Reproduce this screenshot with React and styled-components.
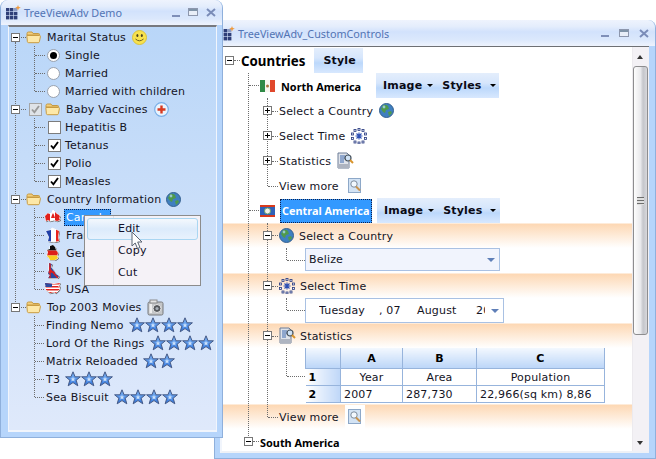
import React from 'react';
import styled, { createGlobalStyle } from 'styled-components';

const Global = createGlobalStyle`
  html, body { margin: 0; padding: 0; background: #fff; }
  body { font-family: "DejaVu Sans", Verdana, sans-serif; font-size: 11px; letter-spacing: .18px; color: #14141f; }
`;

const Desktop = styled.div`
  position: relative;
  width: 656px;
  height: 459px;
  overflow: hidden;
  background: #fff;
`;

const Win = styled.div`
  position: absolute;
  left: ${(p) => p.$x}px;
  top: ${(p) => p.$y}px;
  width: ${(p) => p.$w}px;
  height: ${(p) => p.$h}px;
  z-index: ${(p) => p.$z};
  display: flex;
  flex-direction: column;
  box-sizing: border-box;
  border: 1px solid #8fb0dc;
  border-top: 0;
  border-radius: 8px 8px 0 0;
  background: #b6d5fb;
  overflow: hidden;
`;

const TitleBar = styled.div`
  flex: none;
  height: ${(p) => p.$h}px;
  display: flex;
  align-items: center;
  box-sizing: border-box;
  padding: 0 6px 0 ${(p) => p.$pl}px;
  background: linear-gradient(#eef3fd 0, #e4edfc 25%, #d2e2fc 45%, #dbe8fc 75%, #eef3fd 100%);
`;

const TitleText = styled.span`
  margin-left: 3px;
  font-family: "Noto Sans", sans-serif;
  font-size: 10.8px;
  letter-spacing: 0;
  color: #5274b4;
`;

const Controls = styled.div`
  margin-left: auto;
  display: flex;
  align-items: center;
  gap: ${(p) => p.$gap}px;
`;

const LeftBody = styled.div`
  flex: 1;
  min-height: 0;
  margin: 0 5px 5px 7px;
  border: 1px solid #f1f5fc;
  border-top: 2px solid #77797f;
  border-bottom-width: 2px;
  display: flex;
`;

const Pane = styled.div`
  position: relative;
  flex: 1;
  min-width: 0;
  overflow: hidden;
  box-sizing: border-box;
  padding-top: 1px;
  background: linear-gradient(#b9d6f8, #dfe9fb);
`;

const RightBody = styled.div`
  flex: 1;
  min-height: 0;
  margin: 0 6px 5px 5px;
  border-top: 1px solid #6e7074;
  border-left: 2px solid #f1f5fc;
  border-bottom: 2px solid #eef1f6;
  display: flex;
  background: #fff;
`;

const VLine = styled.i`
  position: absolute;
  z-index: 1;
  left: ${(p) => p.$x}px;
  top: ${(p) => p.$y}px;
  height: ${(p) => p.$len}px;
  border-left: 1px dotted #6d6d6d;
`;

const HLine = styled.i`
  position: absolute;
  z-index: 1;
  left: ${(p) => p.$x}px;
  top: ${(p) => p.$y}px;
  width: ${(p) => p.$len}px;
  border-top: 1px dotted #6d6d6d;
`;

const Row = styled.div`
  display: flex;
  align-items: center;
  height: ${(p) => p.$h || 18}px;
  box-sizing: border-box;
  padding-left: ${(p) => p.$pl}px;
  ${(p) => p.$band && 'background: linear-gradient(#fff 0, #fdd8b4 1px, #fff 100%);'}
`;

const Label = styled.span`
  margin-left: ${(p) => p.$ml ?? 6}px;
  padding-top: 1px;
  white-space: nowrap;
`;

const BoldLabel = styled(Label)`
  font-family: "Noto Sans", sans-serif;
  font-weight: 700;
  font-size: ${(p) => p.$size || 10.9}px;
  letter-spacing: 0;
  color: #000;
`;

const SelectedLabel = styled(BoldLabel)`
  height: 24px;
  line-height: 24px;
  padding-top: 0;
  width: 92px;
  box-sizing: border-box;
  padding-left: 2px;
  background: #3399ff;
  color: #fff;
  outline: 1px dotted #10204a;
  outline-offset: -1px;
`;

const SmallSelected = styled(Label)`
  height: 17px;
  line-height: 17px;
  padding-top: 0;
  width: 47px;
  box-sizing: border-box;
  padding-left: 2px;
  background: #3399ff;
  color: #fff;
  outline: 1px dotted #10204a;
  outline-offset: -1px;
`;

const Slot = styled.span`
  flex: none;
  display: inline-flex;
  margin-left: ${(p) => p.$ml ?? 0}px;
  ${(p) => p.$paper && 'background: #fff; height: 24px; align-items: center; padding: 0 3px;'}
`;

const Expander = styled.span`
  position: relative;
  z-index: 2;
  flex: none;
  width: 9px;
  height: 9px;
  box-sizing: border-box;
  border: 1px solid #777;
  background: #fff;
  &::before {
    content: '';
    position: absolute;
    left: 1px;
    right: 1px;
    top: 3px;
    height: 1px;
    background: #000;
  }
  ${(p) =>
    p.$plus &&
    `&::after {
      content: '';
      position: absolute;
      top: 1px;
      bottom: 1px;
      left: 3px;
      width: 1px;
      background: #000;
    }`}
`;

const Radio = styled.span`
  flex: none;
  width: 11px;
  height: 11px;
  border-radius: 50%;
  border: 1px solid #9aa2ae;
  background: #fff;
  display: flex;
  align-items: center;
  justify-content: center;
  &::after {
    content: '';
    width: 7px;
    height: 7px;
    border-radius: 50%;
    background: ${(p) => (p.$on ? '#000' : 'transparent')};
  }
`;

const Check = styled.span`
  flex: none;
  width: 11px;
  height: 11px;
  margin-left: ${(p) => p.$ml ?? 0}px;
  border: 1px solid ${(p) => (p.$dim ? '#a5a5a5' : '#7c7c7c')};
  background: ${(p) => (p.$dim ? '#dfe3e8' : '#fff')};
  display: flex;
  align-items: center;
  justify-content: center;
`;

const MenuBox = styled.div`
  position: absolute;
  z-index: 5;
  left: 83px;
  top: 215px;
  width: 117px;
  height: 71px;
  box-sizing: border-box;
  border: 1px solid #8c8c8c;
  background: #f5f2f7;
  padding: 2px;
  display: flex;
  flex-direction: column;
  &::before {
    content: '';
    position: absolute;
    left: 28px;
    top: 0;
    bottom: 0;
    width: 1px;
    background: #e2dfe6;
  }
`;

const MenuItem = styled.div`
  position: relative;
  height: 22px;
  line-height: 22px;
  padding-left: 31px;
  box-sizing: border-box;
  border-radius: 3px;
  color: #10102a;
  ${(p) =>
    p.$hot &&
    'border: 1px solid #a9d6f2; line-height: 20px; padding-left: 30px; background: linear-gradient(#f4f8fd, #dcebfb 50%, #e8f2fd);'}
`;

const Pointer = styled.svg`
  position: absolute;
  z-index: 6;
  left: 130px;
  top: 231px;
`;

const Tree = styled.div`
  flex: 1;
  min-width: 0;
  position: relative;
  overflow: hidden;
`;

const ToolButton = styled.div`
  flex: none;
  height: 25px;
  margin-left: ${(p) => p.$ml || 0}px;
  width: ${(p) => p.$w}px;
  display: flex;
  align-items: center;
  box-sizing: border-box;
  padding-left: ${(p) => p.$pad}px;
  background: linear-gradient(#e4eefc 0, #d6e6fc 40%, #bcd8fb 60%, #d8e8fe 100%);
  font-weight: 700;
  font-size: 11px;
  color: #0a0a14;
`;

const ButtonPart = styled.span`
  display: inline-flex;
  align-items: center;
  margin-right: ${(p) => p.$mr || 0}px;
`;

const Caret = styled.span`
  margin-left: ${(p) => p.$ml || 5}px;
  width: 0;
  height: 0;
  border: 3px solid transparent;
  border-top: 3px solid ${(p) => p.$color || '#000'};
  border-bottom: 0;
`;

const FieldCaret = styled.span`
  margin-left: auto;
  width: 0;
  height: 0;
  border: 4px solid transparent;
  border-top: 4px solid #5f7fb8;
  border-bottom: 0;
`;

const FieldRow = styled.div`
  height: 25px;
  padding-left: 83px;
  box-sizing: border-box;
`;

const Field = styled.div`
  width: ${(p) => p.$w}px;
  height: ${(p) => p.$h}px;
  box-sizing: border-box;
  border: 1px solid #a9c1e3;
  background: ${(p) => p.$bg};
  display: flex;
  align-items: center;
  padding: 0 4px 0 ${(p) => p.$pl}px;
`;

const DateParts = styled.div`
  flex: none;
  width: 166px;
  overflow: hidden;
  white-space: nowrap;
  display: flex;
`;

const DatePart = styled.span`
  flex: none;
  width: ${(p) => p.$w}px;
`;

const GridRow = styled.div`
  height: 56px;
  padding-left: 83px;
`;

const Grid = styled.table`
  border-collapse: collapse;
  table-layout: fixed;
  width: 299px;
  font-size: 11px;
  th, td {
    padding: 0;
    height: 16px;
    border: 1px solid #97b4dc;
    white-space: nowrap;
    overflow: hidden;
  }
  td { padding: 0 3px; }
  thead th {
    height: 20px;
    border-top: 0;
    color: #000;
    background: linear-gradient(#f3f8fe, #bcd6f8);
  }
  tbody th {
    text-align: left;
    padding-left: 3px;
    border-left: 0;
    color: #000;
    background: linear-gradient(90deg, #fff, #bfd7f8);
  }
  tr:first-child td { text-align: center; }
`;

const Scrollbar = styled.div`
  position: relative;
  flex: none;
  width: 17px;
  background: #f3f1f5;
  border-left: 1px solid #eceaee;
  box-sizing: border-box;
`;

const Arrow = styled.span`
  position: absolute;
  left: 4px;
  ${(p) => (p.$up ? 'top: 8px;' : 'bottom: 6px;')}
  width: 0;
  height: 0;
  border: 3px solid transparent;
  ${(p) =>
    p.$up
      ? 'border-bottom: 4px solid #333; border-top: 0;'
      : 'border-top: 4px solid #333; border-bottom: 0;'}
`;

const Thumb = styled.div`
  position: absolute;
  left: 0;
  top: 19px;
  width: 15px;
  height: 269px;
  box-sizing: border-box;
  border: 1px solid #8d8d8f;
  border-radius: 3px;
  background: linear-gradient(90deg, #fdfdfd, #e9e9ec 50%, #c5c6cb 70%, #d8d8dc);
  display: flex;
  align-items: center;
  justify-content: center;
`;

const Grip = styled.span`
  width: 7px;
  height: 8px;
  background: repeating-linear-gradient(#6d6d6d 0 1px, #dfdfdf 1px 2px, #dfdfdf 2px 3px);
`;

/* drawings */

const Logo = () => (
  <svg width="15" height="15" viewBox="0 0 15 15">
    {[0, 4, 8].flatMap((x) =>
      [3, 7, 11].map((y) => (
        <rect key={`${x}-${y}`} x={x} y={y} width="3.4" height="3.4" fill={x === 8 && y === 3 ? '#8c9cc4' : '#2f3f78'} />
      ))
    )}
    <path d="M12 0l.8 2 2 .6-2 .8-.8 2-.8-2-2-.8 2-.6z" fill="#f09a3c" />
  </svg>
);

const WinButtons = ({ gap }) => (
  <Controls $gap={gap}>
    <svg width="8" height="10" viewBox="0 0 8 10"><rect y="7" width="8" height="2" fill="#7f8fb8" /></svg>
    <svg width="10" height="9" viewBox="0 0 10 9">
      <rect x=".5" y=".5" width="9" height="7" fill="#e8eef8" stroke="#8d97ad" />
      <rect x="1" y="1" width="8" height="2" fill="#7f93a8" />
    </svg>
    <svg width="10" height="9" viewBox="0 0 10 9">
      <path d="M1 1l8 7M9 1L1 8" stroke="#7a8cb8" strokeWidth="2" fill="none" />
    </svg>
  </Controls>
);

const Folder = () => (
  <svg width="15" height="14" viewBox="0 0 15 14">
    <path d="M1 3.500Q1 2 2.500 2H6l1 1.500h5.500q1 0 1 1V5H1z" fill="#f4cf7c" stroke="#c49a45" />
    <path d="M.8 5.500h12.600q1.300 0 1 1.200l-1 5q-.2 1-1.200 1H2.600q-1 0-1.200-1z" fill="#fde8a8" stroke="#c99c42" />
  </svg>
);

const Smile = () => (
  <svg width="15" height="15" viewBox="0 0 15 15">
    <circle cx="7.500" cy="7.500" r="7" fill="#f8e24e" stroke="#d9c23c" />
    <ellipse cx="5.400" cy="5.600" rx="1" ry="1.500" fill="#4a4420" />
    <ellipse cx="9.800" cy="5.600" rx="1" ry="1.500" fill="#4a4420" />
    <path d="M3.500 9q4 3.600 8 0" fill="none" stroke="#6d6020" />
  </svg>
);

const RedPlus = () => (
  <svg width="15" height="15" viewBox="0 0 15 15">
    <circle cx="7.500" cy="7.500" r="6.800" fill="#eaf3fd" stroke="#7ab0e8" strokeWidth="1.200" />
    <path d="M3.500 7.500h8M7.500 3.500v8" stroke="#d83a20" strokeWidth="2.400" />
  </svg>
);

const Globe = () => (
  <svg width="15" height="15" viewBox="0 0 15 15">
    <circle cx="7.500" cy="7.500" r="7" fill="#3f7fc0" stroke="#35608f" />
    <path d="M4 2q3-1 5 1l1 3-3 1-1 3-2-1-2-3zM9 9l3-1 1 2-3 3z" fill="#4f9a4c" />
    <circle cx="5" cy="4" r="1.400" fill="#a9d3f0" opacity=".8" />
  </svg>
);

/* country silhouettes: the outline is drawn twice, shadow and white edge, then clipped bars */
const Silhouette = ({ id, d, w = 16, h = 16, children }) => (
  <svg width={w} height={h} viewBox={`0 0 ${w} ${h}`}>
    <path d={d} fill="#555" stroke="#777" strokeWidth="1" transform="translate(.6 .7)" />
    <path d={d} fill="#fff" stroke="#fff" strokeWidth="1" />
    <clipPath id={id}><path d={d} /></clipPath>
    <g clipPath={`url(#${id})`}>{children}</g>
  </svg>
);

const Canada = () => (
  <Silhouette id="ca" d="M0 7l3-3 1 1 3-1 1-3 2 2 2 2 2 1 1 2-1 1 1 2-3 1-3-1-4 1-2-1-2 1z">
    <rect y="0" width="5" height="16" fill="#e0201c" />
    <rect x="10" y="0" width="6" height="16" fill="#e0201c" />
    <path d="M7 6l1-2 1 2 1 3H6z" fill="#e0201c" />
  </Silhouette>
);

const France = () => (
  <Silhouette id="fr" d="M1 4l5-1 1-2 7 3-1 6 1 4-5 1-6-1 1-4z">
    <rect x="0" width="6" height="16" fill="#1f3fa8" />
    <rect x="11" width="5" height="16" fill="#e8241c" />
  </Silhouette>
);

const Germany = () => (
  <Silhouette id="de" d="M5 1l3-1 2 2 1 3 2 3-1 3 1 2-3 2H5l-1-2-2-2 1-4-1-2 3-1z">
    <rect width="16" height="5.500" fill="#0c0c0c" />
    <rect y="5.500" width="16" height="5" fill="#dd1f1a" />
    <rect y="10.500" width="16" height="6" fill="#f8cd20" />
  </Silhouette>
);

const Britain = () => (
  <Silhouette id="uk" d="M4 0l3 1-1 3 3 4 2 3 3 2-1 2H3l2-3-2-1 1-4z">
    <rect width="16" height="16" fill="#2a48a0" />
    <path d="M5 0v16M1 9h13M2 3l11 12" stroke="#e0201c" strokeWidth="1.400" />
  </Silhouette>
);

const Usa = () => (
  <Silhouette id="us" d="M0 2l9 1 6-1-2 4 2-1-1 4-3 3-2-1-4 1-4-3z">
    {[2, 5, 8, 11].map((y) => <rect key={y} y={y} width="16" height="1.500" fill="#e0201c" />)}
    <rect width="7" height="6" fill="#2a48a0" />
  </Silhouette>
);

const Mexico = () => (
  <svg width="15" height="14" viewBox="0 0 15 14">
    <rect y="1" width="5" height="12" fill="#2f8a46" />
    <rect x="5" y="1" width="5" height="12" fill="#f6f6ee" />
    <rect x="10" y="1" width="5" height="12" fill="#e0482c" />
    <circle cx="7.500" cy="7" r="1.500" fill="#a8763c" />
  </svg>
);

const Belize = () => (
  <svg width="15" height="14" viewBox="0 0 15 14">
    <rect y="1" width="15" height="12" fill="#d83a1c" />
    <rect y="3" width="15" height="8" fill="#2f62b8" />
    <circle cx="7.500" cy="7" r="3" fill="#f2f2ea" stroke="#6aa06a" />
  </svg>
);

const Star = () => (
  <svg width="16" height="16" viewBox="0 0 16 16">
    <defs>
      <linearGradient id="starFill" x1="0" y1="0" x2="0" y2="1">
        <stop offset="0" stopColor="#7fb4f2" />
        <stop offset="1" stopColor="#2f74dc" />
      </linearGradient>
    </defs>
    <path d="M8 .8l2.100 5h5.300l-4.200 3.400 1.600 5.600L8 11.600l-4.800 3.200 1.600-5.600L.6 5.800h5.300z" fill="url(#starFill)" stroke="#465a86" />
    <path d="M8 5.500l.7 1.900h2L9.100 8.600l.6 2L8 9.400l-1.700 1.200.6-2-1.600-1.200h2z" fill="#cfe3fa" />
  </svg>
);

const Stars = ({ n, ml }) => (
  <Slot $ml={ml}>
    {Array.from({ length: n }, (_, i) => <Star key={i} />)}
  </Slot>
);

const Camera = () => (
  <svg width="17" height="17" viewBox="0 0 17 17">
    <rect x="1" y="3" width="15" height="13" rx="1.500" fill="#c4c6c8" stroke="#77797c" />
    <rect x="3" y="1" width="7" height="3" fill="#e6e6e6" stroke="#8c8c8c" />
    <circle cx="10" cy="9.500" r="4" fill="#55585c" stroke="#e8e8e8" />
    <circle cx="10" cy="9.500" r="1.600" fill="#a9b0b8" />
    <rect x="2.500" y="5" width="2.500" height="9" fill="#eeeeee" />
  </svg>
);

const ringDots = [[6.500, 0], [2.500, 1], [10.500, 1], [0, 4.500], [13, 4.500], [0, 9], [13, 9], [2.500, 12.500], [10.500, 12.500], [6.500, 13.500]];

const Cluster = () => (
  <svg width="16" height="16" viewBox="0 0 16 16">
    {ringDots.map(([x, y]) => (
      <rect key={`${x}-${y}`} x={x + .5} y={y + .5} width="2" height="2" fill="#eaf0fa" stroke="#26387e" strokeWidth=".8" />
    ))}
    <path d="M8 4.500v7M4.500 8h7M5.500 5.500l5 5M10.500 5.500l-5 5" stroke="#2d50b4" strokeWidth="1.100" />
  </svg>
);

const DocLens = () => (
  <svg width="17" height="17" viewBox="0 0 17 17">
    <path d="M1 1h9l2 2v13H1z" fill="#dfe3ea" stroke="#6c7c96" />
    <path d="M1 12h11v4H1z" fill="#aeb4c0" />
    <path d="M3 4h5M3 6h5M3 8h4M3 10h4" stroke="#3f6bb0" />
    <circle cx="11" cy="6" r="3" fill="#cfe2f5" stroke="#44505c" strokeWidth="1.200" />
    <path d="M13 8l3 3" stroke="#d8942c" strokeWidth="2" />
  </svg>
);

const PageLens = () => (
  <svg width="14" height="15" viewBox="0 0 14 15">
    <rect x=".5" y=".5" width="12" height="14" fill="#d3e3f4" stroke="#8da8c8" />
    <circle cx="6" cy="6" r="3.200" fill="#f2f8fd" stroke="#7d8c9c" />
    <path d="M8 8.500l4 4" stroke="#c9934c" strokeWidth="2" />
  </svg>
);

const Tick = ({ dim }) => (
  <svg width="9" height="9" viewBox="0 0 9 9">
    <path d="M1 4.500l2.400 2.800L8 1" fill="none" stroke={dim ? '#9a9a9a' : '#000'} strokeWidth="1.900" />
  </svg>
);

/* guide lines, in pane coordinates */

const leftV = [[6, 15, 260], [25, 19, 45], [25, 91, 63], [25, 181, 81], [25, 289, 81]];
const leftH = [
  ...[10, 82, 172, 280].map((y) => [12, y, 5]),
  ...[28, 46, 64, 100, 118, 136, 154].map((y) => [26, y, 10]),
  ...[190, 208, 226, 244, 262, 298, 316, 334, 352, 370].map((y) => [26, y, 9]),
];
const rightV = [[26, 26, 363], [45, 51, 88], [45, 176, 194], [64, 201, 12], [64, 251, 12], [64, 301, 28]];
const rightH = [
  [12, 13, 6], [27, 38, 10], [27, 163, 10], [31, 394, 6],
  ...[64, 89, 114, 188, 239, 289].map((y) => [50, y, 6]),
  ...[139, 370].map((y) => [46, y, 10]),
  ...[213, 263, 329].map((y) => [65, y, 18]),
];

const Guides = ({ v, h }) => (
  <>
    {v.map(([x, y, len]) => <VLine key={`${x}-${y}`} $x={x} $y={y} $len={len} />)}
    {h.map(([x, y, len]) => <HLine key={`${x}-${y}`} $x={x} $y={y} $len={len} />)}
  </>
);

const Caption = ({ children, ml }) => <Label $ml={ml}>{children}</Label>;

function LeftWindow() {
  return (
    <Win $x={0} $y={0} $w={223} $h={438} $z={2}>
      <TitleBar $h={25} $pl={5}>
        <Logo />
        <TitleText>TreeViewAdv Demo</TitleText>
        <WinButtons gap={8} />
      </TitleBar>
      <LeftBody>
        <Pane>
          <Row $pl={2}><Expander /><Slot $ml={6}><Folder /></Slot><Caption>Marital Status</Caption><Slot $ml={6}><Smile /></Slot></Row>
          <Row $pl={38}><Radio $on /><Caption ml={5}>Single</Caption></Row>
          <Row $pl={38}><Radio /><Caption ml={5}>Married</Caption></Row>
          <Row $pl={38}><Radio /><Caption ml={5}>Married with children</Caption></Row>
          <Row $pl={2}><Expander /><Check $ml={9} $dim><Tick dim /></Check><Slot $ml={3}><Folder /></Slot><Caption>Baby Vaccines</Caption><Slot $ml={6}><RedPlus /></Slot></Row>
          <Row $pl={39}><Check /><Caption ml={4}>Hepatitis B</Caption></Row>
          <Row $pl={39}><Check><Tick /></Check><Caption ml={4}>Tetanus</Caption></Row>
          <Row $pl={39}><Check><Tick /></Check><Caption ml={4}>Polio</Caption></Row>
          <Row $pl={39}><Check><Tick /></Check><Caption ml={4}>Measles</Caption></Row>
          <Row $pl={2}><Expander /><Slot $ml={6}><Folder /></Slot><Caption>Country Information</Caption><Slot $ml={5}><Globe /></Slot></Row>
          <Row $pl={36}><Canada /><SmallSelected $ml={3}>Canada</SmallSelected></Row>
          <Row $pl={36}><France /><Caption ml={5}>France</Caption></Row>
          <Row $pl={36}><Germany /><Caption ml={5}>Germany</Caption></Row>
          <Row $pl={36}><Britain /><Caption ml={5}>UK</Caption></Row>
          <Row $pl={36}><Usa /><Caption ml={5}>USA</Caption></Row>
          <Row $pl={2}><Expander /><Slot $ml={6}><Folder /></Slot><Caption>Top 2003 Movies</Caption><Slot $ml={5}><Camera /></Slot></Row>
          <Row $pl={37}><Caption ml={0}>Finding Nemo</Caption><Stars n={4} ml={5} /></Row>
          <Row $pl={37}><Caption ml={0}>Lord Of the Rings</Caption><Stars n={4} ml={5} /></Row>
          <Row $pl={37}><Caption ml={0}>Matrix Reloaded</Caption><Stars n={2} ml={5} /></Row>
          <Row $pl={37}><Caption ml={0}>T3</Caption><Stars n={3} ml={5} /></Row>
          <Row $pl={37}><Caption ml={0}>Sea Biscuit</Caption><Stars n={4} ml={5} /></Row>
          <Guides v={leftV} h={leftH} />
        </Pane>
      </LeftBody>
      <MenuBox>
        <MenuItem $hot>Edit</MenuItem>
        <MenuItem>Copy</MenuItem>
        <MenuItem>Cut</MenuItem>
      </MenuBox>
      <Pointer width="13" height="19" viewBox="0 0 13 19">
        <path d="M1 1v14l3.200-3 2.300 5.500 2.500-1-2.300-5.500H11z" fill="#fff" stroke="#5b6472" />
      </Pointer>
    </Win>
  );
}

const Toolbar = ({ first }) => (
  <ToolButton $ml={first} $w={123} $pad={7}>
    <ButtonPart $mr={9}>Image<Caret /></ButtonPart>
    <ButtonPart>Styles<Caret $ml={8} /></ButtonPart>
  </ToolButton>
);

function RightWindow() {
  return (
    <Win $x={214} $y={20} $w={442} $h={439} $z={1}>
      <TitleBar $h={26} $pl={5}>
        <Logo />
        <TitleText>TreeViewAdv_CustomControls</TitleText>
        <WinButtons gap={10} />
      </TitleBar>
      <RightBody>
        <Tree>
          <Row $h={26} $pl={3}>
            <Expander />
            <BoldLabel $ml={7} $size={13.3}>Countries</BoldLabel>
            <ToolButton $ml={9} $w={49} $pad={9}>Style</ToolButton>
          </Row>
          <Row $h={25} $pl={38}>
            <Mexico />
            <BoldLabel $ml={6}>North America</BoldLabel>
            <Toolbar first={15} />
          </Row>
          <Row $h={25} $pl={41}><Expander $plus /><Caption ml={7}>Select a Country</Caption><Slot $ml={6}><Globe /></Slot></Row>
          <Row $h={25} $pl={41}><Expander $plus /><Caption ml={7}>Select Time</Caption><Slot $ml={6}><Cluster /></Slot></Row>
          <Row $h={25} $pl={41}><Expander $plus /><Caption ml={7}>Statistics</Caption><Slot $ml={6}><DocLens /></Slot></Row>
          <Row $h={25} $pl={57}><Caption ml={0}>View more</Caption><Slot $ml={9}><PageLens /></Slot></Row>
          <Row $h={25} $pl={38}>
            <Belize />
            <SelectedLabel $ml={5}>Central America</SelectedLabel>
            <Toolbar first={5} />
          </Row>
          <Row $h={25} $pl={41} $band><Expander /><Slot $ml={7}><Globe /></Slot><Caption ml={5}>Select a Country</Caption></Row>
          <FieldRow>
            <Field $w={195} $h={23} $bg="#f1f4fd" $pl={3}>
              Belize
              <FieldCaret />
            </Field>
          </FieldRow>
          <Row $h={25} $pl={41} $band><Expander /><Slot $ml={7}><Cluster /></Slot><Caption ml={5}>Select Time</Caption></Row>
          <FieldRow>
            <Field $w={199} $h={25} $bg="#fff" $pl={13}>
              <DateParts>
                <DatePart $w={60}>Tuesday</DatePart>
                <DatePart $w={38}>, 07</DatePart>
                <DatePart $w={59}>August</DatePart>
                <DatePart $w={30}>2007</DatePart>
              </DateParts>
              <FieldCaret />
            </Field>
          </FieldRow>
          <Row $h={25} $pl={41} $band><Expander /><Slot $ml={7}><DocLens /></Slot><Caption ml={4}>Statistics</Caption></Row>
          <GridRow>
            <Grid>
              <colgroup>
                <col width="35" />
                <col width="62" />
                <col width="74" />
                <col width="128" />
              </colgroup>
              <thead>
                <tr><th /><th>A</th><th>B</th><th>C</th></tr>
              </thead>
              <tbody>
                <tr><th>1</th><td>Year</td><td>Area</td><td>Population</td></tr>
                <tr><th>2</th><td>2007</td><td>287,730</td><td>22,966(sq km) 8,86</td></tr>
              </tbody>
            </Grid>
          </GridRow>
          <Row $h={25} $pl={57} $band><Caption ml={0}>View more</Caption><Slot $ml={6} $paper><PageLens /></Slot></Row>
          <Row $h={25} $pl={22}><Expander /><BoldLabel $ml={7}>South America</BoldLabel></Row>
          <Guides v={rightV} h={rightH} />
        </Tree>
        <Scrollbar>
          <Arrow $up />
          <Thumb><Grip /></Thumb>
          <Arrow />
        </Scrollbar>
      </RightBody>
    </Win>
  );
}

export default function App() {
  return (
    <Desktop>
      <Global />
      <RightWindow />
      <LeftWindow />
    </Desktop>
  );
}
